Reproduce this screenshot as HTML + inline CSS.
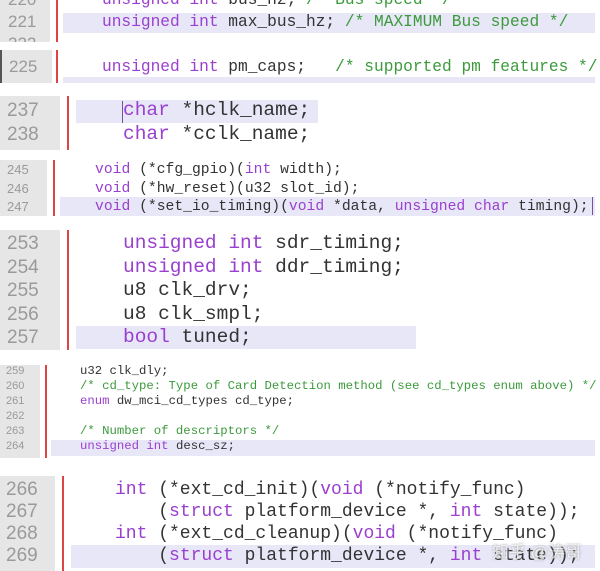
<!DOCTYPE html><html><head><style>
body{margin:0;width:600px;height:571px;background:#fff;position:relative;overflow:hidden;font-family:"Liberation Mono",monospace;color:#333}
div{position:absolute;white-space:pre}
.g{background:#e6e6e6}
.r{background:#d44;width:2px}
.h{background:#e7e7f8}
.n{font-family:"Liberation Sans",sans-serif;color:#9a9a9a}
.k{color:#9a3fcf}.c{color:#3c9a3c}
</style></head><body>
<!-- block1 -->
<div class="g" style="left:0;top:0;width:50px;height:42px"></div>
<div class="r" style="left:56px;top:0;height:42px"></div>
<div class="h" style="left:63px;top:13px;width:532px;height:20px"></div>
<div class="n" style="left:8px;top:-11px;font-size:17px;line-height:22px">220
221
222</div>
<div style="left:102px;top:-11px;font-size:16.2px;line-height:22px"><span class="k">unsigned int</span> bus_hz; <span class="c">/* Bus speed */</span>
<span class="k">unsigned int</span> max_bus_hz; <span class="c">/* MAXIMUM Bus speed */</span></div>
<!-- block2 -->
<div style="left:0;top:42px;width:600px;height:8px;background:#fff"></div>
<div class="g" style="left:0;top:50px;width:50px;height:33px;border-left:2px solid #555"></div>
<div class="r" style="left:56px;top:50px;height:33px"></div>
<div class="h" style="left:63px;top:77px;width:532px;height:6px"></div>
<div class="n" style="left:9px;top:56px;font-size:17px;line-height:22px">225</div>
<div style="left:102px;top:56px;font-size:16.2px;line-height:22px"><span class="k">unsigned int</span> pm_caps;   <span class="c">/* supported pm features */</span></div>
<!-- block3 -->
<div class="g" style="left:0;top:96px;width:60px;height:54px"></div>
<div class="r" style="left:67px;top:96px;height:54px"></div>
<div class="h" style="left:76px;top:100px;width:242px;height:23px"></div>
<div style="left:122px;top:101px;width:1px;height:22px;background:#7a4fa0"></div>
<div class="n" style="left:7px;top:99px;font-size:19px;line-height:23.5px">237
238</div>
<div style="left:123px;top:99px;font-size:19.5px;line-height:23.5px"><span class="k">char</span> *hclk_name;
<span class="k">char</span> *cclk_name;</div>
<!-- block4 -->
<div class="g" style="left:0;top:160px;width:47px;height:56px"></div>
<div class="r" style="left:53px;top:160px;height:56px"></div>
<div class="h" style="left:60px;top:197px;width:535px;height:19px"></div>
<div style="left:592px;top:197px;width:1px;height:18px;background:#7a4fa0"></div>
<div class="n" style="left:7px;top:161px;font-size:13px;line-height:18.5px">245
246
247</div>
<div style="left:95px;top:161px;font-size:14.7px;line-height:18.5px"><span class="k">void</span> (*cfg_gpio)(<span class="k">int</span> width);
<span class="k">void</span> (*hw_reset)(u32 slot_id);
<span class="k">void</span> (*set_io_timing)(<span class="k">void</span> *data, <span class="k">unsigned char</span> timing);</div>
<!-- block5 -->
<div class="g" style="left:0;top:230px;width:60px;height:120px"></div>
<div class="r" style="left:67px;top:230px;height:120px"></div>
<div class="h" style="left:76px;top:326px;width:340px;height:23px"></div>
<div class="n" style="left:7px;top:232px;font-size:19px;line-height:23.5px">253
254
255
256
257</div>
<div style="left:123px;top:232px;font-size:19.5px;line-height:23.5px"><span class="k">unsigned int</span> sdr_timing;
<span class="k">unsigned int</span> ddr_timing;
u8 clk_drv;
u8 clk_smpl;
<span class="k">bool</span> tuned;</div>
<!-- block6 -->
<div class="g" style="left:0;top:365px;width:40px;height:93px"></div>
<div class="r" style="left:45px;top:365px;height:93px"></div>
<div class="h" style="left:51px;top:440px;width:544px;height:16px"></div>
<div class="n" style="left:6px;top:364px;font-size:11px;line-height:15px">259
260
261
262
263
264</div>
<div style="left:80px;top:364px;font-size:12.3px;line-height:15px">u32 clk_dly;
<span class="c">/* cd_type: Type of Card Detection method (see cd_types enum above) */</span>
<span class="k">enum</span> dw_mci_cd_types cd_type;

<span class="c">/* Number of descriptors */</span>
<span class="k">unsigned int</span> desc_sz;</div>
<!-- block7 -->
<div class="g" style="left:0;top:476px;width:55px;height:95px"></div>
<div class="r" style="left:62px;top:476px;height:95px"></div>
<div class="h" style="left:71px;top:545px;width:524px;height:23px"></div>
<div class="n" style="left:6px;top:479px;font-size:19px;line-height:22px">266
267
268
269</div>
<div style="left:115px;top:479px;font-size:18px;line-height:22px"><span class="k">int</span> (*ext_cd_init)(<span class="k">void</span> (*notify_func)
    (<span class="k">struct</span> platform_device *, <span class="k">int</span> state));
<span class="k">int</span> (*ext_cd_cleanup)(<span class="k">void</span> (*notify_func)
    (<span class="k">struct</span> platform_device *, <span class="k">int</span> state));</div>
<div style="left:492px;top:538px;font-family:'Liberation Sans','Noto Sans CJK SC',sans-serif;font-size:17px;color:rgba(255,255,255,0.75);text-shadow:0 0 2px #999">知乎 @涛哥</div>
</body></html>
